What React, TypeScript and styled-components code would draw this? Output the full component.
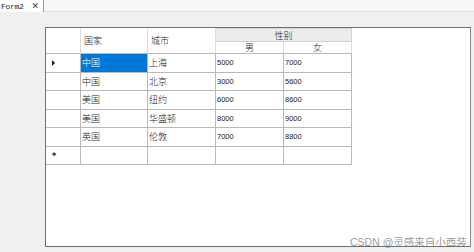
import React from 'react';
import styled, { createGlobalStyle } from 'styled-components';

const GlobalStyle = createGlobalStyle`
  html, body {
    margin: 0;
    padding: 0;
    background: #f0f0f0;
    width: 474px;
    height: 252px;
    overflow: hidden;
  }
  #root {
    position: relative;
    width: 474px;
    height: 252px;
  }
`;

const TabStrip = styled.div`
  display: flex;
  height: 12px;
  background: #f7f7f7;
  border-bottom: 1px solid #e2e2e2;
  box-sizing: border-box;
`;
const Tab = styled.div`
  display: flex;
  align-items: center;
  width: 44px;
  height: 12px;
  box-sizing: border-box;
  padding-left: 1px;
  background: #ffffff;
  border-right: 1px solid #9a9a9a;
  font-family: 'Liberation Mono', monospace;
  font-size: 8px;
  letter-spacing: -0.3px;
  color: #222;
`;
const TabClose = styled.span`
  margin-left: 8px;
  font-family: 'DejaVu Sans', sans-serif;
  font-size: 9px;
  color: #444;
`;

const Content = styled.div`
  padding: 15px 3px 0 45px;
`;

const GridFrame = styled.div`
  width: 426px;
  height: 220px;
  box-sizing: border-box;
  background: #ffffff;
  border: 1px solid #6e6e6e;
  border-right-color: #8a8a8a;
`;

const Grid = styled.div`
  display: grid;
  grid-template-columns: 35px 67px 68px 68px 68px;
  grid-template-rows: 14px 12px repeat(6, 18.5px);
  width: 306px;
`;

const Cell = styled.div<{ $selected?: boolean; $num?: boolean; $center?: boolean }>`
  box-sizing: border-box;
  display: flex;
  align-items: center;
  justify-content: ${p => (p.$center ? 'center' : 'flex-start')};
  padding-left: ${p => (p.$center ? '0' : '1px')};
  border-right: 1px solid #b9b9b9;
  border-bottom: 1px solid #b9b9b9;
  background: ${p => (p.$selected ? '#0078d7' : '#ffffff')};
  color: ${p => (p.$selected ? '#ffffff' : '#1a1a1a')};
  font-family: ${p =>
    p.$num ? "'Liberation Sans', sans-serif" : "'Noto Sans CJK SC', sans-serif"};
  font-size: ${p => (p.$num ? '7.5px' : '9px')};
  font-weight: 300;
  white-space: nowrap;
  overflow: hidden;
`;

const HeaderCell = styled(Cell)<{ $rows?: number }>`
  grid-row: span ${p => p.$rows || 1};
  padding-left: ${p => (p.$center ? '0' : '3px')};
  border-right-color: #dcdcdc;
  border-bottom-color: #b9b9b9;
`;

const BandCell = styled(Cell)`
  grid-column: span 2;
  background: #ececec;
  border-top: 1px solid #d6d6d6;
  border-bottom-color: #d0d0d0;
  border-right-color: #d6d6d6;
`;

const RowHeader = styled(Cell)`
  justify-content: flex-start;
  padding-left: 6px;
`;

const Arrow = styled.span`
  width: 0;
  height: 0;
  border-top: 3px solid transparent;
  border-bottom: 3px solid transparent;
  border-left: 3px solid #1a1a1a;
`;

const Star = styled.span`
  font-family: 'DejaVu Sans', sans-serif;
  font-size: 8px;
  font-weight: 700;
  color: #222;
  line-height: 1;
  margin-top: 3px;
`;

const Watermark = styled.div`
  position: absolute;
  left: 350px;
  top: 234px;
  font-family: 'Liberation Sans', 'Noto Sans CJK SC', sans-serif;
  font-size: 10.5px;
  color: rgba(120, 120, 120, 0.75);
  white-space: nowrap;
`;

const rows = [
  ['中国', '上海', '5000', '7000'],
  ['中国', '北京', '3000', '5600'],
  ['美国', '纽约', '6000', '8600'],
  ['美国', '华盛顿', '8000', '9000'],
  ['英国', '伦敦', '7000', '8800'],
];

export default function App() {
  return (
    <>
      <GlobalStyle />
      <TabStrip>
        <Tab>
          Form2<TabClose>✕</TabClose>
        </Tab>
      </TabStrip>
      <Content>
        <GridFrame>
          <Grid>
            <HeaderCell $rows={2} />
            <HeaderCell $rows={2}>国家</HeaderCell>
            <HeaderCell $rows={2}>城市</HeaderCell>
            <BandCell $center>性别</BandCell>
            <HeaderCell $center>男</HeaderCell>
            <HeaderCell $center>女</HeaderCell>

            {rows.map((r, i) => (
              <React.Fragment key={i}>
                <RowHeader>{i === 0 && <Arrow />}</RowHeader>
                <Cell $selected={i === 0}>{r[0]}</Cell>
                <Cell>{r[1]}</Cell>
                <Cell $num>{r[2]}</Cell>
                <Cell $num>{r[3]}</Cell>
              </React.Fragment>
            ))}

            <RowHeader>
              <Star>*</Star>
            </RowHeader>
            <Cell />
            <Cell />
            <Cell />
            <Cell />
          </Grid>
        </GridFrame>
      </Content>
      <Watermark>CSDN @灵感来自小西装</Watermark>
    </>
  );
}
